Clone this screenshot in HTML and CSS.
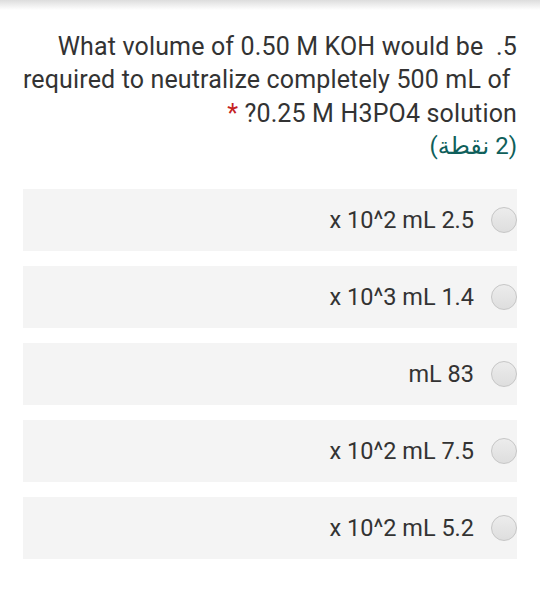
FILE: index.html
```html
<!DOCTYPE html>
<html lang="en">
<head>
<meta charset="utf-8">
<title>Question</title>
<link rel="stylesheet" href="styles.css">
</head>
<body>
<div class="shade"></div>
<main class="form">
  <div class="question">
    <div class="line">What volume of 0.50 M KOH would be&nbsp; .5</div>
    <div class="line">required to neutralize completely 500 mL of&nbsp;</div>
    <div class="line"><span class="req">*</span> ?0.25 M H3PO4 solution</div>
    <div class="line points" dir="rtl">(2 نقطة)</div>
  </div>
  <div class="options">
    <label class="option"><span class="opt-text">x 10^2 mL 2.5</span><span class="radio"></span></label>
    <label class="option"><span class="opt-text">x 10^3 mL 1.4</span><span class="radio"></span></label>
    <label class="option"><span class="opt-text">mL 83</span><span class="radio"></span></label>
    <label class="option"><span class="opt-text">x 10^2 mL 7.5</span><span class="radio"></span></label>
    <label class="option"><span class="opt-text">x 10^2 mL 5.2</span><span class="radio"></span></label>
  </div>
</main>
</body>
</html>
```

FILE: styles.css
```css
html, body {
  margin: 0;
  padding: 0;
  background: #ffffff;
}

body {
  font-family: Roboto, "Noto Sans", "DejaVu Sans", sans-serif;
  color: #333333;
}

.shade {
  height: 10px;
  background: linear-gradient(#dddddd, #ffffff);
}

.form {
  padding: 20px 23px 0 20px;
}

.question {
  text-align: right;
  font-size: 25px;
  letter-spacing: 0.15px;
  line-height: 33.3px;
}

.line {
  white-space: nowrap;
}

.req {
  color: #c5221f;
}

.points {
  text-align: right;
  color: #0f5f5b;
  font-size: 24px;
  letter-spacing: 0;
}

.options {
  margin-top: 26px;
  display: flex;
  flex-direction: column;
  gap: 15px;
  margin-left: 3px;
}

.option {
  height: 62px;
  background: #f4f4f4;
  display: flex;
  align-items: center;
  justify-content: flex-end;
  gap: 17px;
  font-size: 23.5px;
}

.radio {
  width: 24px;
  height: 24px;
  border-radius: 50%;
  border: 1px solid #c6c6c6;
  background: linear-gradient(#ececec, #dedede);
}
```
